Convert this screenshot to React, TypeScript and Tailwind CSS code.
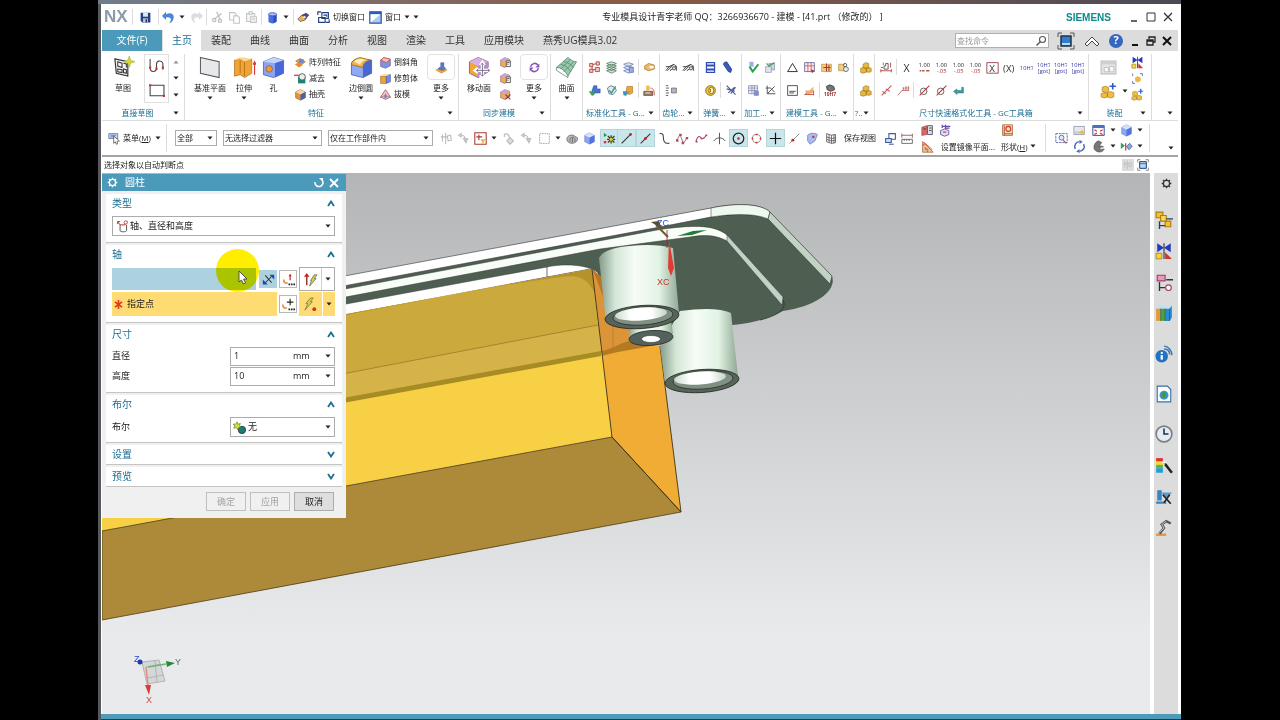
import type { ReactNode } from "react";

const glyphs: Record<string, ReactNode> = {
  save: <><path d="M2 2h12v12H4l-2-2z" fill="#27417f" /><path d="M5 2h6v5H5z" fill="#dfe8f8" /><path d="M5 9h6v5H5z" fill="#b9c7e2" /><path d="M8 10h2v4H8z" fill="#27417f" /></>,
  undo: <path d="M5 1v3c6-3 11 0 9 6-1 3-3 4-5 5 3-4 3-8-4-7v3L0 6z" fill="#4a86d4" />,
  redo: <path d="M11 1v3C5 1 0 4 2 10c1 3 3 4 5 5-3-4-3-8 4-7v3l5-5z" fill="#dddddd" />,
  cut: <g fill="none" stroke="#bdbdbd" strokeWidth="1.5"><path d="M7 1l4 9M13 3l-9 7" /><circle cx="4" cy="11" r="2" /><circle cx="11" cy="12" r="2" /></g>,
  copy: <g fill="#fff" stroke="#c3c3c3" strokeWidth="1.3"><path d="M2 2h6l2 2v7H2z" /><path d="M7 6h5l2 2v7H7z" /></g>,
  paste: <g fill="#f5f5f5" stroke="#c3c3c3" strokeWidth="1.3"><path d="M2 3h10v10H2z" /><path d="M5 1h4v3H5zM7 7h7v7H7zM9 10h3" /></g>,
  cylinder: <><path d="M3 4v9c1 3 9 3 10 0V4z" fill="#4c6fe0" /><path d="M9 5h4v8l-4 2z" fill="#2d4fc4" /><ellipse cx="8" cy="4" rx="5" ry="2" fill="#a9bdf8" stroke="#3852b6" /></>,
  eraser: <><path d="M1 10l5-5 8 0-4 6-6 2z" fill="#e8b34a" stroke="#665a6c" /><path d="M6 5l5-3 4 3-5 5z" fill="#4c4a80" /><path d="M7 7l3-1 1 2-3 1z" fill="#fff" /></>,
  switchWin: <g fill="#fff" stroke="#23427a" strokeWidth="1.4"><path d="M6 2h8v7H6zM2 8h8v6H2z" /><path d="M1 5V1h4M15 10v4h-4M8 5h4v2" fill="none" /></g>,
  win: <><path d="M1 1h14v14H1z" fill="#a9cdf2" stroke="#2a52a0" strokeWidth="1.5" /><path d="M1 1h14v3H1z" fill="#2a5cb8" /><path d="M2 4h12L2 14z" fill="#fff" /></>,
  sketch: <><path d="M2 2l9 2v10l-8-2z" fill="#f4f4f4" stroke="#333" strokeWidth=".8" /><path d="M4 4l3 1v3l-3-1zM8 9l2 .5V12l-2-.5zM4 9l3 .5v2L4 11zM8 5l2 .5V8" fill="none" stroke="#333" strokeWidth=".7" /><path d="M12 0l1 3 3 1-3 1-1 3-1-3-3-1 3-1z" fill="#e5d238" stroke="#93b63a" strokeWidth=".4" /></>,
  spline: <><path d="M2 1v8c0 5 6 5 6 0V6c0-4 5-4 6-1v6" fill="none" stroke="#444" strokeWidth="1" /><path d="M1 8h2v2H1zM7 9h2v2H7zM13 8h2v2h-2z" fill="#c33" /></>,
  rect: <><path d="M2 3h13v10H2z" fill="none" stroke="#444" strokeWidth="1" /><path d="M1 2h2v2H1zM14 12h2v2h-2z" fill="#c33" /></>,
  plane: <path d="M1 1l13 3v11L1 12z" fill="#e6e8ea" stroke="#53575b" strokeWidth=".7" />,
  extrude: <><path d="M1 3l4-1 3 2 5-2v10l-5 3-3-2-4 1z" fill="#f0a436" stroke="#b46d15" strokeWidth=".5" /><path d="M1 3l4-1 3 2 5-2-5-1-4 0z" fill="#fbd88a" /><path d="M5 3v9M8 4v10" stroke="#b46d15" strokeWidth=".6" /><path d="M15 13V5M14 6l1-2 1 2" stroke="#d33" strokeWidth=".8" fill="none" /></>,
  hole: <><path d="M1 4l7-3 7 2v9l-7 3-7-2z" fill="#8ba5f4" stroke="#3c55a8" strokeWidth=".5" /><path d="M1 4l7-3 7 2-6 2z" fill="#c6d3fb" /><path d="M9 5l6-2v9l-6 3z" fill="#4968d8" /><circle cx="5" cy="9" r="2.3" fill="#f09a34" stroke="#744" strokeWidth=".4" /></>,
  pattern: <><path d="M2 6l6-3 6 4-5 4z" fill="#f0a436" stroke="#99651c" strokeWidth=".7" /><path d="M6 7a3 2 0 106 0V4H6z" fill="#6d87d6" /><path d="M1 10l5-2 5 3-5 3z" fill="#e48b2b" /></>,
  subtract: <><path d="M5 6h9v8H5z" fill="#1a8278" /><circle cx="10" cy="6" r="4" fill="#e8f0ee" stroke="#3a4c4a" /><path d="M0 4h6" stroke="#d33" strokeWidth="1.5" /></>,
  shell: <><path d="M2 5l6-3 6 3v7l-6 3-6-3z" fill="#e6953c" stroke="#7b5228" strokeWidth=".7" /><path d="M2 5l6 3 6-3-6-3z" fill="#f8d7a0" /><path d="M8 8l6-3v7l-6 3z" fill="#4a5fb0" /></>,
  edge: <><path d="M1 6c0-3 3-4 6-4l8 1v9l-6 3-8-2z" fill="#8fa9f4" stroke="#3c4e95" strokeWidth=".5" /><path d="M1 6c0-3 3-4 6-5l8 2c-4 0-6 2-6 5z" fill="#f5b545" stroke="#8f6420" strokeWidth=".5" /><path d="M9 8c0-3 3-5 6-5v9l-6 3z" fill="#4a67cd" /><path d="M3 4c1-2 4-2 5-2l4 1c-3 0-4 1-5 3z" fill="#fcf0c8" /></>,
  chamfer: <><path d="M2 5l4-3 8 2v8l-6 3-6-2z" fill="#7f93e2" stroke="#6b4d79" strokeWidth=".7" /><path d="M2 5l4-3 8 2-5 4z" fill="#f2c4bb" stroke="#c44" strokeWidth=".9" /></>,
  trim: <><path d="M2 5h7v9H2z" fill="#f0a33c" stroke="#8d5c1f" strokeWidth=".7" /><path d="M9 4l5-1v9l-5 2z" fill="#718ce8" stroke="#3c4e95" strokeWidth=".7" /><path d="M2 5l4-3 8 1-5 2z" fill="#fae0a2" /></>,
  draft: <><path d="M8 2l6 9-6 3-6-3z" fill="#eccbd0" stroke="#b8484f" /><path d="M8 6l2 5-2 2-2-2z" fill="#7386ca" /><path d="M1 12l7-3 7 3" fill="none" stroke="#888" /></>,
  more: <><path d="M1 11l6-3 8 3-7 4z" fill="#f0a436" stroke="#b47520" strokeWidth=".5" /><path d="M4 9c0 3 9 3 9 0l-2-2V2H7v5z" fill="#5a77cf" stroke="#3b519c" strokeWidth=".5" /></>,
  move: <><path d="M1 4l6-3 7 3v7l-7 4-6-3z" fill="#f2a63c" stroke="#7f5a86" strokeWidth=".6" /><path d="M1 4l6-3 7 3-7 3z" fill="#d4b0e8" /><path d="M7 7l7-3v7l-7 4z" fill="#b48ad4" /><path d="M10 5v9M6 10h9M8.500 6.500l1.500-2 1.500 2M8.500 13l1.500 2 1.500-2M7 8.500L5 10l2 1.500M14 8.500l2 1.500-2 1.500" fill="none" stroke="#fff" strokeWidth="2.200" /><path d="M10 5v9M6 10h9M9 6l1-1 1 1M9 13l1 1 1-1M7 9l-1 1 1 1M14 9l1 1-1 1" fill="none" stroke="#666" strokeWidth=".6" /></>,
  syncA: <><path d="M2 5l5-3 6 2v7l-6 3-5-2z" fill="#f0a85a" stroke="#7c5a76" strokeWidth=".7" /><path d="M2 5l5-3 6 2-5 3z" fill="#c9a2df" /><path d="M9 6h5v7H9z" fill="#fff" stroke="#444" /><path d="M10 8h3M10 10h2" stroke="#444" /></>,
  syncX: <><path d="M2 5l5-3 6 2v7l-6 3-5-2z" fill="#f0a85a" stroke="#7c5a76" strokeWidth=".7" /><path d="M2 5l5-3 6 2-5 3z" fill="#c9a2df" /><path d="M8 8l6 6M14 8l-6 6" stroke="#8a4050" strokeWidth="1.5" /></>,
  refresh: <><path d="M3 7c2-5 7-5 9-2" fill="none" stroke="#8a55b8" strokeWidth="2" /><path d="M14 3v5H9zM2 13V8h5z" fill="#8a55b8" /><path d="M13 9c-2 5-7 5-9 2" fill="none" stroke="#8a55b8" strokeWidth="2" /></>,
  surface: <><path d="M1 8l8-7c2 2 4 3 6 3l-6 10C7 10 4 8 1 8z" fill="#9bc9ae" stroke="#4b7d63" strokeWidth=".5" /><path d="M4 6c3 0 5 2 7 5M6 4c3 0 5 2 7 4M4 9l7-7M6 11l7-7M1 8v2l8 5v-1" fill="none" stroke="#4b7d63" strokeWidth=".5" /></>,
  nodes: <g stroke="#b33" strokeWidth="1"><path d="M4 5l7-2M4 11l8-1M5 5v6" stroke="#555" /><path d="M2 3h4v4H2zM10 1h4v4h-4zM2 10h4v4H2zM9 8h5v5H9z" fill="#f3c7b5" /></g>,
  stack: <g fill="#d8eadb" stroke="#446b57" strokeWidth=".9"><path d="M2 12l6-2 6 2-6 3zM2 9l6-2 6 2-6 3zM2 6l6-2 6 2-6 3zM2 3l6-2 6 2-6 3z" /></g>,
  stackBlue: <g fill="#dbe0f7" stroke="#6274a8" strokeWidth=".9"><path d="M2 12l6-2 6 2-6 3zM2 8l6-2 6 2-6 3zM2 4l6-2 6 2-6 3z" /><path d="M9 8h5v6H9z" fill="#9cabe6" /></g>,
  tag: <><path d="M2 6l5-3 7 2v5l-7 2-5-2z" fill="#edb765" stroke="#a36f20" strokeWidth=".8" /><path d="M8 6h5v3H8z" fill="#fff" /></>,
  checkBlue: <><path d="M7 2h4v4h4v5H9l-3 3-2-3z" fill="#4970d4" stroke="#2b479c" strokeWidth=".6" /><path d="M2 9l3 4 3-4" fill="none" stroke="#39a845" strokeWidth="2" /></>,
  checkGear: <><path d="M3 5l4-3 5 2 2 4-4 5-5-1z" fill="#dbe5f6" stroke="#4c69a8" /><path d="M5 8l3 3 5-8" fill="none" stroke="#38a146" strokeWidth="1.6" /></>,
  checkOrange: <><path d="M6 3h7v8l-4 2-4-2z" fill="#f0a436" stroke="#a06919" strokeWidth=".7" /><path d="M1 9h6l-2 5H2z" fill="#4d86da" /><path d="M2 11l3 3 4-5" fill="none" stroke="#38a146" /></>,
  press: <><path d="M1 9h11v5H1z" fill="#9a8062" stroke="#665039" /><path d="M4 2h4v6H4z" fill="#eeb84e" /><path d="M9 5c4 0 5 3 5 9" fill="none" stroke="#c44" /><path d="M3 11h6" stroke="#fff" /></>,
  gearA: <><path d="M1 12l4-5 6-3 3 3v5M3 12l8-8M6 12l8-6M1 7h6" fill="none" stroke="#444" strokeWidth="1.2" /><circle cx="11" cy="9" r="2" fill="#ddd" stroke="#444" /></>,
  ruler: <><path d="M1 2h3M1 5h4M1 8h3M1 11h4M1 14h3" stroke="#444" /><path d="M8 5h6v6H8z" fill="#a4b4e5" stroke="#8a6f4a" /></>,
  spring: <g fill="none" stroke="#2d4db2" strokeWidth="1.5"><path d="M3 2h10v3H3zM3 6h10v4H3zM3 11h10v3H3z" /></g>,
  coil: <path d="M4 2l3-1 6 9-1 4-3-1-6-9z" fill="#3a5ac4" stroke="#1f3681" />,
  ring: <><circle cx="8" cy="8" r="6" fill="#e8be36" stroke="#806413" /><ellipse cx="9" cy="8" rx="3" ry="4" fill="#fff3c0" stroke="#806413" /><path d="M8 6v4" stroke="#806413" /></>,
  scissors: <path d="M2 2l11 11M2 6l10 3M4 11l8-7M7 12l6-8" fill="none" stroke="#4a5c94" strokeWidth="1.4" />,
  okBlue: <><path d="M3 1h5v6H3z" fill="#9baee8" /><path d="M3 7l4 6 7-9" fill="none" stroke="#27a34d" strokeWidth="2.500" /></>,
  blocks: <g stroke="#8189a8" strokeWidth=".8"><path d="M6 3h7v8H6z" fill="#ccd3ea" /><path d="M2 7h7v7H2z" fill="#e2e5ee" /><path d="M3 3l3 3 7-4" fill="none" stroke="#4da04c" strokeWidth="1.5" /></g>,
  table: <g stroke="#7f86a8" strokeWidth=".9"><path d="M2 2h11v10H2z" fill="#eef1fb" /><path d="M2 5h11M2 8h11M6 2v10M9 2v10" /><path d="M9 9h5v5H9z" fill="#7c90dc" /></g>,
  axes: <path d="M4 2v10h10M4 12l9-9M7 4l6 6M2 5h5" fill="none" stroke="#555" strokeWidth="1.2" />,
  triangle: <path d="M8 3l6 10H2z" fill="none" stroke="#333" strokeWidth="1.2" />,
  tableRed: <><path d="M2 2h12v11H2z" fill="#fbeaea" stroke="#56639c" /><path d="M2 6h12M6 2v11M10 2v11" stroke="#c55" /><path d="M10 10l4 2-3 3z" fill="#933" /></>,
  crossGold: <><path d="M2 4h12v9H2z" fill="#f2cd7c" stroke="#b08534" strokeWidth=".7" /><path d="M8 3v10M4 8h9M11 5v8" stroke="#a33" strokeWidth="1.2" /></>,
  gridGold: <><path d="M2 4h9v8H2z" fill="#f2cd7c" stroke="#9d8642" strokeWidth=".8" /><circle cx="11" cy="10" r="3" fill="#e9eef0" stroke="#3d6b55" /><circle cx="10" cy="5" r="2" fill="#fff" stroke="#444" /></>,
  note: <><path d="M2 2h12v12H2z" fill="#fff" stroke="#333" /><path d="M4 9h8M4 11h6" stroke="#333" /></>,
  brush: <><path d="M2 8h6l5-5-1 8-6 2z" fill="#e9b06d" /><path d="M2 13h11M2 13l3-2M13 8v6" fill="none" stroke="#b33" /></>,
  h7: <><path d="M3 3l4-2 5 2 1 4-5 2-4-2z" fill="#777" stroke="#333" /><text x="0" y="15" fontSize="6" fill="#9b2f2f" fontWeight="bold">10H7</text></>,
  gold: <g fill="#e8b740" stroke="#97701a" strokeWidth=".7"><path d="M5 4l3-2 4 1v5l-4 1-3-1zM2 9l3-1 4 1v5l-4 1-3-1zM9 9l3-1 3 1v4l-3 1-3-1z" /></g>,
  dim: <><path d="M5 10V6h2V3h3v7z" fill="none" stroke="#444" /><path d="M1 12h13M1 10v4M14 10v4M13 2v6M4 2v3M1 8h3" stroke="#a33" /></>,
  x: <text x="3" y="13" fontSize="13" fill="#333">X</text>,
  d1: <><text x="1" y="7" fontSize="7" fill="#222">1.00</text><path d="M2 12h2M5 12h3M10 12h4" stroke="#a55" strokeWidth="2" /></>,
  d2: <><text x="1" y="7" fontSize="7" fill="#222">1.00</text><text x="2" y="15" fontSize="7" fill="#a33">-.05</text></>,
  boxX: <><path d="M1 2h14v13H1z" fill="none" stroke="#8e2f35" /><text x="4" y="13" fontSize="12" fill="#333">X</text></>,
  parenX: <text x="0" y="13" fontSize="12" fill="#333">(X)</text>,
  t10: <text x="0" y="11" fontSize="7" fill="#3333a0">10H7</text>,
  t10g: <><text x="0" y="7" fontSize="7" fill="#3333a0">10H7</text><text x="1" y="15" fontSize="7" fill="#3333a0">[got]</text></>,
  slashRed: <path d="M2 14L14 2M3 9l4 3M7 6l5 3" stroke="#bd5a5a" strokeWidth="1.3" fill="none" />,
  flagRed: <><path d="M1 14l5-6h9" fill="none" stroke="#bd5a5a" /><path d="M7 4h2v3H7zM10 3h2v4h-2zM13 3h2v4h-2z" fill="#c77" /></>,
  dia: <><circle cx="7" cy="9" r="4" fill="none" stroke="#444" /><path d="M2 14L14 2" stroke="#b33" strokeWidth="1.3" /></>,
  back: <path d="M2 9l4-3v2h6V4h2v7H6v2z" fill="#3e9da8" stroke="#24666f" strokeWidth=".6" />,
  assembly: <><path d="M1 2h14v12H1z" fill="#e5e5e5" stroke="#bcbcbc" /><path d="M1 2h14v3H1z" fill="#cfcfcf" /><path d="M4 8h4v4H4zM9 7h4v5H9z" fill="#f8f8f8" stroke="#b5b5b5" strokeWidth=".7" /></>,
  addPart: <><g fill="#f0be42" stroke="#a37618" strokeWidth=".6"><path d="M2 5l3-1 3 1v4l-3 1-3-1zM1 11l3-1 3 1v3l-3 1-3-1zM7 10l3-1 3 1v4l-3 1-3-1z" /></g><path d="M12 1v6M9 4h6" stroke="#2c5cd0" strokeWidth="1.500" /></>,
  mirror: <><path d="M8 1v14" stroke="#333" /><path d="M2 1l6 4-6 4zM14 1L8 5l6 4z" fill="#2439c0" /><path d="M1 10h5v5H1z" fill="#f5d43c" stroke="#9b7b1c" strokeWidth=".7" /><path d="M9 9l6 6H9z" fill="#d2372b" /></>,
  focus: <><path d="M2 5V2M2 11v3h3M11 2h3v3" fill="none" stroke="#455fb0" /><path d="M5 7l3-2 4 2v4l-4 2-3-2z" fill="#edb846" /></>,
  menu: <><path d="M1 2h11v6H1z" fill="#c9d5ee" stroke="#5c74ad" /><path d="M3 4h7M3 6h5" stroke="#5c74ad" /><path d="M7 5l7 6-3 .5 1 3-2 .5-1-3-2 2z" fill="#fff" stroke="#333" strokeWidth=".8" /></>,
  ghost: <g fill="none" stroke="#bcbcbc" strokeWidth="1.300"><path d="M3 3v9M7 1v14M1 6h8M9 5l4-1 1 6-4 1z" /></g>,
  ghostB: <g fill="none" stroke="#bcbcbc" strokeWidth="1.500"><path d="M2 4l3-2v4zM5 4c4 0 5 2 5 5" /><path d="M8 8l5 0-2 5z" fill="#ccc" /></g>,
  ghostC: <g fill="none" stroke="#bcbcbc" strokeWidth="1.500"><path d="M3 6V3c3-2 6 0 6 5" /><path d="M10 7l4 4-4 4-4-4z" fill="#ddd" /></g>,
  filter: <><path d="M1 1h14v14H1z" fill="#fff" stroke="#a33a32" strokeWidth="1.3" /><path d="M6 3v7M3 6h7" stroke="#a33a32" strokeWidth="1.3" /><path d="M8 9h6l-2 3v2h-2v-2z" fill="#edb33f" /></>,
  lasso: <path d="M2 2h12v12H2z" fill="none" stroke="#999" strokeDasharray="2 1" />,
  gray3d: <><path d="M1 9c0-4 4-6 8-5l5 3c1 4-2 6-6 7-4 0-7-2-7-5z" fill="#b8b8bc" stroke="#555" strokeWidth=".8" /><path d="M5 8c2-2 5-2 6 0v4M5 8v4M8 7v6" fill="none" stroke="#555" strokeWidth=".8" /></>,
  cube: <><path d="M2 4l6-3 6 3v8l-6 3-6-3z" fill="#8aa7f2" stroke="#5a6fb7" strokeWidth=".5" /><path d="M2 4l6-3 6 3-6 3z" fill="#d5e0fb" /><path d="M8 7l6-3v8l-6 3z" fill="#4f74dc" /></>,
  snap: <><path d="M1 1l4 3-4 2z" fill="#2a9a3a" /><path d="M6 5l8 8M6 13l8-8M10 4v10M5 9h10" stroke="#3f3c1c" strokeWidth="1.600" /><circle cx="10" cy="9" r="2" fill="#e8d02c" /><path d="M1 11h3v3H1z" fill="#d33" /></>,
  endPt: <><path d="M2 14L13 3" stroke="#333" strokeWidth="1.300" /><circle cx="13" cy="3" r="1.700" fill="#c22" /></>,
  midPt: <><path d="M2 14L14 2" stroke="#333" strokeWidth="1.300" /><circle cx="8" cy="8" r="1.800" fill="#c22" /></>,
  nearPt: <><path d="M2 14L14 2" stroke="#777" /><circle cx="6" cy="10" r="1.800" fill="#c22" /></>,
  curve: <path d="M2 2c6-1 4 4 5 8 1 4 3 4 7 4" fill="none" stroke="#444" strokeWidth="1.300" />,
  poly: <><path d="M1 10l4-7 4 11 5-7" fill="none" stroke="#666" /><path d="M0 9h3v3H0zM4 2h3v3H4zM7 12h3v3H7zM12 6h3v3h-3z" fill="#b8455c" /></>,
  wave: <><path d="M1 12c3-9 5-7 7-4 2 1 4-1 6-4" fill="none" stroke="#a44a60" strokeWidth="1.400" /><path d="M1 11h2v2H1zM7 7h2v2H7zM13 3h2v2h-2z" fill="#b34" /></>,
  cross: <path d="M8 1v14M1 11c3-5 11-5 14 0" fill="none" stroke="#555" strokeWidth="1.200" />,
  center: <><circle cx="8" cy="8" r="6.500" fill="none" stroke="#222" strokeWidth="1.500" /><circle cx="8" cy="8" r="1.500" fill="#c22" /></>,
  quad: <><circle cx="8" cy="8" r="5" fill="none" stroke="#777" /><path d="M7 2h2v2H7zM7 12h2v2H7zM2 7h2v2H2zM12 7h2v2h-2z" fill="#c33" /></>,
  plus: <path d="M8 1v14M1 8h14" stroke="#111" strokeWidth="1.500" />,
  face: <><path d="M2 4c3-3 8-3 12-1l-3 8-6 4-3-4z" fill="#a9bdf0" stroke="#5c70b0" strokeWidth=".8" /><circle cx="9" cy="6" r="1.500" fill="#c33" /></>,
  grid3d: <g fill="none" stroke="#555" strokeWidth="1"><path d="M2 2l6 2v10l-6-2zM8 4l5-1v10l-5 1M2 6l6 2 5-1M2 9l6 2 5-1M5 3v10M11 3v11" /></g>,
  layers: <g fill="#fff" stroke="#3f5b9c" strokeWidth="1.300"><path d="M6 2h8v7H6z" /><path d="M2 8h7v5H2z" fill="#cddaf5" /><path d="M6 15h6" /></g>,
  distance: <g fill="none" stroke="#8b4a4a"><path d="M1 4h13M1 2v5M14 2v5" /><path d="M1 9h13v5H1zM4 9v2M7 9v2M10 9v2" stroke="#555" /></g>,
  book: <><path d="M1 4l6-2v11l-6 1z" fill="#d66" stroke="#833" strokeWidth=".7" /><path d="M8 2h6v11H8z" fill="#ddd" stroke="#445" /><path d="M3 6h3M10 5h3M10 8h3" stroke="#333" /></>,
  stamp: <><path d="M2 8l5-2 5 2v5l-5 2-5-2z" fill="#e8ddf0" stroke="#57469c" /><path d="M4 1v4M8 1v5M4 3h10M8 5h5" fill="none" stroke="#6a4bb0" strokeWidth="1.500" /><path d="M5 10h4" stroke="#c0456a" strokeWidth="1.500" /></>,
  angle: <><path d="M2 2v13h13zM5 9v3h4z" fill="#f1c995" stroke="#a66640" /><path d="M4 3l10 9M2 6h3M8 13v2" stroke="#c44" /></>,
  sheet: <><path d="M2 1h12v13H2z" fill="#f7e3b0" stroke="#a0622b" /><circle cx="9" cy="6" r="3" fill="none" stroke="#c33" strokeWidth="1.400" /><path d="M4 2v12M4 12h10" stroke="#a33" /></>,
  zoomWin: <><path d="M1 2h14v11H1z" fill="none" stroke="#4759a8" strokeDasharray="3 1" /><circle cx="8" cy="7" r="3" fill="#dfe8fa" stroke="#445a9c" /><path d="M10 10l4 4" stroke="#c44" strokeWidth="1.500" /></>,
  image: <><path d="M1 3h13v10H1z" fill="#e6e9ee" stroke="#8d98aa" /><path d="M2 9h11v3H2z" fill="#c5ccd6" /><path d="M11 6l1 3 3 1-3 1-1 3-1-3-3-1 3-1z" fill="#efb93e" /></>,
  rotate: <><path d="M3 11a6 6 0 015-9M13 5a6 6 0 01-5 9" fill="none" stroke="#4866b4" strokeWidth="1.800" /><path d="M8 0l4 2-4 3zM8 11v5l-4-2z" fill="#4866b4" /></>,
  fit: <><path d="M1 2h14v12H1z" fill="#fff" stroke="#35519e" strokeWidth="1.200" /><path d="M1 2h14v3H1z" fill="#4f70bd" /><path d="M3 7l3 2M13 7l-3 2M3 13l3-2M13 13l-3-2" stroke="#c33" strokeWidth="1.500" /></>,
  shade: <><path d="M8 1C2 3 0 12 6 14c4 2 8 0 9-3-2 1-5 1-6-1l5-2-5-1 3-4z" fill="#777" stroke="#444" strokeWidth=".7" /><path d="M9 10l6-2-1 3z" fill="#ccc" /></>,
  section: <><path d="M8 8l4-4 3 4-4 4z" fill="#8fa7df" stroke="#4c61a0" /><path d="M1 3v8l5-4z" fill="#39a051" /><path d="M7 4v9" stroke="#c33" strokeWidth="1.500" /></>,
  navA: <><path d="M1 1h6v5H1zM9 9h5v5H9z" fill="#f5c327" stroke="#b07c0e" /><path d="M5 4h5v5H5z" fill="#f9d95a" stroke="#b07c0e" /><path d="M4 9v7M4 13h5M10 7h6" stroke="#283a78" strokeWidth="1.200" /></>,
  navC: <><path d="M2 2h7v5H2z" fill="#e59bbb" stroke="#a53c6c" /><path d="M4 8v8M4 13h5M10 6h6" stroke="#333" strokeWidth="1.200" /><circle cx="12" cy="13" r="2.500" fill="#fff" stroke="#a53c6c" /></>,
  books: <><path d="M1 4h4v11H1z" fill="#e69a2a" /><path d="M5 4h4v11H5z" fill="#48a143" /><path d="M9 4h4l2-3v11l-2 3H9z" fill="#2a8bd2" /><path d="M1 4l3-3h11l-2 3z" fill="#bde3f2" /><path d="M5 4v11M9 4v11M13 4v11" stroke="#245" strokeWidth=".5" /></>,
  info: <><circle cx="6" cy="10" r="5.500" fill="#2272c3" /><path d="M6 9v4" stroke="#fff" strokeWidth="2" /><circle cx="6" cy="7" r="1" fill="#fff" /><path d="M8 1c4 0 7 4 7 8M8 3.500c3 0 5 2 5 5" fill="none" stroke="#3c7ab5" strokeWidth="1.300" /></>,
  doc: <><path d="M2 1h9l3 3v11H2z" fill="#fff" stroke="#3173b2" /><circle cx="8" cy="9" r="4" fill="#4293c8" /><path d="M6 7l3-1 1 3-2 3-2-2z" fill="#3f9a43" /></>,
  clock: <><circle cx="8" cy="8" r="7" fill="#e5ecf3" stroke="#7b8189" strokeWidth="1.500" /><path d="M8 3v5h4" fill="none" stroke="#234" strokeWidth="1.400" /></>,
  palette: <><path d="M1 1h6v3H1z" fill="#e53127" /><path d="M1 4h6v3H1z" fill="#f5d628" /><path d="M1 7h6v3H1z" fill="#4fbe3a" /><path d="M1 10h6v4H1z" fill="#289ad8" /><path d="M8 5l7 9" stroke="#222" strokeWidth="2.200" /><path d="M8 3v4M6 5h4" stroke="#fff" /></>,
  tool: <><path d="M2 2h4v9H2zM1 12h9v2H1z" fill="#3a83bb" /><path d="M6 4h9l-3 4H8z" fill="#5f9ccb" /><path d="M7 6l7 8M13 6l-5 7" stroke="#222" strokeWidth="1.500" /></>,
  robot: <><path d="M1 13h9v2H1z" fill="#e5903a" /><path d="M4 13l4-5-2-3 4-3 4 2" fill="none" stroke="#555" strokeWidth="2.200" /><path d="M4 12l4-4-2-3 4-3" fill="none" stroke="#ccc" strokeWidth=".8" /></>,
  gear: <g fill="none" stroke="currentColor"><circle cx="8" cy="8" r="4.500" strokeWidth="1.800" /><path d="M8 1v2M8 13v2M1 8h2M13 8h2M3 3l1.500 1.500M11.500 11.500L13 13M13 3l-1.500 1.500M4.500 11.500L3 13" strokeWidth="2" /></g>,
  axisType: <><path d="M5 6v7c0 2 8 2 8 0V6" fill="none" stroke="#555" strokeWidth="1.200" /><path d="M2 2l3 4h6l3-4M2 2h3M2 2v3" fill="none" stroke="#b5302c" strokeWidth="1.200" /><circle cx="12" cy="3" r="2" fill="#fff" stroke="#b5302c" /></>,
  flip: <><path d="M4 12l8-8M4 3l8 9" stroke="#333" strokeWidth="1.300" /><path d="M9 2h6v6zM1 8v6h6z" fill="#2046b4" /></>,
  vecDots: <><path d="M2 8c0 4 2 5 5 4" fill="none" stroke="#df8a36" strokeWidth="2" /><path d="M10 9V3" stroke="#b33" strokeWidth="1.500" /><path d="M8 4l2-3 2 3z" fill="#c22" /><path d="M8 13h2v2H8zM11 13h2v2h-2zM14 13h2v2h-2z" fill="#222" /></>,
  ptDots: <><path d="M1 8c0 4 2 5 5 4" fill="none" stroke="#df8a36" strokeWidth="2" /><path d="M10 1v8M6 5h8" stroke="#222" strokeWidth="1.400" /><path d="M8 13h2v2H8zM11 13h2v2h-2zM14 13h2v2h-2z" fill="#222" /></>,
  vecBolt: <><path d="M4 14V4" stroke="#8e2d2d" strokeWidth="1.500" /><path d="M1 5l3-4 3 4z" fill="#c22" /><path d="M12 3h3l-3 4h2l-7 8 2-6H8z" fill="#d8cf42" stroke="#555" strokeWidth=".7" /></>,
  ptBolt: <><path d="M8 1h3L8 5h2l-8 9 3-7H3z" fill="#d8cf42" stroke="#666" strokeWidth=".7" /><circle cx="12" cy="13" r="2" fill="#d3302a" /></>,
  bool: <><circle cx="11" cy="11" r="4.500" fill="#1c7b72" stroke="#234" /><path d="M5 1l1 3 3-1-1 3 2 2-3 0-1 3-2-3-3 1 1-3-2-2h3z" fill="#cfe03a" stroke="#5e7a1e" strokeWidth=".8" /></>,
};

function Glyph({ name, size = "size-[13px]" }: { name: string; size?: string }) {
  return (
    <svg viewBox="0 0 16 16" className={`${size} shrink-0`} aria-hidden="true">
      {glyphs[name]}
    </svg>
  );
}

function Caret({ className = "" }: { className?: string }) {
  return (
    <svg viewBox="0 0 6 4" className={`h-[4px] w-[6px] shrink-0 ${className}`} aria-hidden="true">
      <path d="M0.500 0.500h5L3 3.500z" fill="#222" />
    </svg>
  );
}

function IconButton({ name, size, className = "" }: { name: string; size?: string; className?: string }) {
  return (
    <button type="button" aria-label={name} className={`flex shrink-0 items-center justify-center ${className}`}>
      <Glyph name={name} size={size} />
    </button>
  );
}

function Rule({ className = "h-4" }: { className?: string }) {
  return <span className={`w-px shrink-0 bg-[#dcdcdc] ${className}`} />;
}

function WindowButtons() {
  return (
    <>
      <button type="button" aria-label="最小化" className="flex size-3 items-center justify-center">
        <svg viewBox="0 0 10 10" className="size-[10px]"><path d="M2 9h6" stroke="#333" strokeWidth="1.500" /></svg>
      </button>
      <button type="button" aria-label="最大化" className="flex size-3 items-center justify-center">
        <svg viewBox="0 0 10 10" className="size-[10px]"><path d="M1 1h8v8H1z" fill="none" stroke="#333" /></svg>
      </button>
      <button type="button" aria-label="关闭" className="flex size-3 items-center justify-center">
        <svg viewBox="0 0 10 10" className="size-[10px]"><path d="M1 1l8 8M9 1L1 9" stroke="#333" strokeWidth="1.300" /></svg>
      </button>
    </>
  );
}

function TitleBar() {
  return (
    <header className="flex h-[26px] items-center bg-white pr-[4px] pl-[2px] text-[8px]">
      <span className="w-[28px] font-['Liberation_Sans',sans-serif] text-[17px] leading-5 font-bold text-[#8b9ba8]">NX</span>
      <Rule />
      <IconButton name="save" className="mx-[6px]" />
      <Rule />
      <IconButton name="undo" className="ml-[3px]" />
      <Caret className="mx-[4px]" />
      <IconButton name="redo" className="ml-px mr-[3px]" />
      <Rule />
      <div className="ml-[4px] mr-[3px] flex gap-[4px]">
        <IconButton name="cut" />
        <IconButton name="copy" />
        <IconButton name="paste" />
      </div>
      <Rule />
      <IconButton name="cylinder" className="ml-[4px]" />
      <Caret className="mx-[4px]" />
      <Rule />
      <IconButton name="eraser" className="mx-[3px]" />
      <button type="button" className="ml-[4px] flex items-center gap-[3px] whitespace-nowrap"><Glyph name="switchWin" />切换窗口</button>
      <button type="button" className="ml-[4px] flex items-center gap-[3px] whitespace-nowrap"><Glyph name="win" />窗口<Caret /></button>
      <Caret className="ml-[3px]" />
      <h1 className="flex-1 text-center text-[9px] whitespace-nowrap">专业模具设计青宇老师 QQ：3266936670 - 建模 - [41.prt （修改的） ]</h1>
      <span className="mr-[17px] font-['Liberation_Sans',sans-serif] text-[10px] font-bold text-[#0d8a8c]">SIEMENS</span>
      <div className="flex gap-[5px]"><WindowButtons /></div>
    </header>
  );
}

const tabs = ["主页", "装配", "曲线", "曲面", "分析", "视图", "渲染", "工具", "应用模块", "燕秀UG模具3.02"];

function TabBar() {
  return (
    <nav className="flex h-[21px] items-stretch bg-[#dcdcdc] pr-[5px] text-[10px]">
      <button type="button" className="w-[60px] bg-[#4b9abb] text-white">文件(F)</button>
      <div className="ml-px flex gap-px">
        {tabs.map((tab, i) => (
          <button key={tab} type="button" className={`px-[9px] whitespace-nowrap ${i === 0 ? "bg-white text-[#1b6e92]" : "text-[#333]"}`}>{tab}</button>
        ))}
      </div>
      <div className="ml-auto flex items-center">
        <label className="flex h-[15px] w-[94px] items-center border border-[#b0b0b0] bg-white px-px">
          <input aria-label="查找命令" placeholder="查找命令" className="w-full min-w-0 text-[8px] outline-none placeholder:text-[#9a9a9a]" />
          <svg viewBox="0 0 16 16" className="size-[12px] shrink-0"><circle cx="10" cy="6" r="4" fill="none" stroke="#555" strokeWidth="1.500" /><path d="M7 9l-5 5" stroke="#555" strokeWidth="2" /></svg>
        </label>
        <button type="button" aria-label="全屏" className="ml-[8px]">
          <svg viewBox="0 0 18 18" className="size-[18px]"><path d="M1 5V1h4M13 1h4v4M17 13v4h-4M5 17H1v-4" fill="none" stroke="#555" /><path d="M4 4h10v10H4z" fill="#2e7fd0" stroke="#234" strokeWidth="1.500" /><path d="M5 11h8v2H5z" fill="#b8dcf6" /></svg>
        </button>
        <button type="button" aria-label="最小化功能区" className="ml-[9px]">
          <svg viewBox="0 0 16 12" className="h-[12px] w-[16px]"><path d="M1 9l7-7 7 7-2 2-5-5-5 5z" fill="#fff" stroke="#444" /></svg>
        </button>
        <button type="button" aria-label="帮助" className="ml-[9px] flex size-[14px] items-center justify-center rounded-full bg-[#3567c0] text-[11px] font-bold text-white">?</button>
        <div className="ml-[6px] flex gap-[4px]">
          <button type="button" aria-label="最小化文档" className="flex size-3 items-center justify-center"><svg viewBox="0 0 10 10" className="size-[10px]"><path d="M2 9h6" stroke="#111" strokeWidth="2" /></svg></button>
          <button type="button" aria-label="还原文档" className="flex size-3 items-center justify-center"><svg viewBox="0 0 10 10" className="size-[10px]"><path d="M3 3V1h6v5H7M1 4h6v5H1zM1 5h6" fill="none" stroke="#222" strokeWidth="1.300" /></svg></button>
          <button type="button" aria-label="关闭文档" className="flex size-3 items-center justify-center"><svg viewBox="0 0 10 10" className="size-[10px]"><path d="M1 1l8 8M9 1L1 9" stroke="#111" strokeWidth="2" /></svg></button>
        </div>
      </div>
    </nav>
  );
}

function Group({ title, width, caret = true, children }: { title: string; width: string; caret?: boolean; children?: ReactNode }) {
  return (
    <section className={`flex shrink-0 flex-col border-r border-[#dcdcdc] ${width}`}>
      <div className="flex h-[52px]">{children}</div>
      <div className="flex h-[14px] items-center pr-[5px]">
        <h2 className="min-w-0 flex-1 overflow-hidden text-center text-[8px] leading-[12px] whitespace-nowrap text-[#1b6e92]">{title}</h2>
        {caret && <Caret />}
      </div>
    </section>
  );
}

function BigButton({ name, label, width, caret = true, boxed = false }: { name: string; label: string; width: string; caret?: boolean; boxed?: boolean }) {
  return (
    <button type="button" className={`flex shrink-0 flex-col items-center text-[8px] leading-[12px] whitespace-nowrap ${width}`}>
      {boxed ? (
        <span className="flex h-[26px] w-[28px] items-center justify-center rounded-sm border border-[#e2e2e2]"><Glyph name={name} /></span>
      ) : (
        <span className="flex h-[26px] items-center"><Glyph name={name} size="size-[23px]" /></span>
      )}
      <span className="mt-[2px]">{label}</span>
      {caret && <Caret className="mt-[2px]" />}
    </button>
  );
}

function ListButton({ name, label, caret = false }: { name: string; label?: string; caret?: boolean }) {
  return (
    <button type="button" aria-label={label ?? name} className="flex h-[16px] items-center gap-[2px] text-[8px] whitespace-nowrap">
      <Glyph name={name} />
      {label}
      {caret && <Caret className="ml-[5px]" />}
    </button>
  );
}

// "|" in a row draws a thin divider
function IconRows({ rows }: { rows: string[][] }) {
  return (
    <div className="flex flex-col gap-[9px] pt-[6px] pl-[4px]">
      {rows.map((row, i) => (
        <div key={i} className="flex h-[14px] items-center gap-[3px]">
          {row.map((name, j) => (name === "|" ? <Rule key={j} /> : <IconButton key={j} name={name} className="w-[14px]" />))}
        </div>
      ))}
    </div>
  );
}

function Ribbon() {
  return (
    <div className="flex h-[70px] border-b border-[#dcdcdc] bg-white pt-[3px]">
      <Group title="直接草图" width="w-[83px]">
        <BigButton name="sketch" label="草图" width="w-[42px]" caret={false} />
        <div className="flex h-[49px] w-[25px] flex-col items-center justify-around border border-[#e0e0e0]">
          <IconButton name="spline" size="size-[17px]" />
          <IconButton name="rect" size="size-[17px]" />
        </div>
        <div className="flex h-[49px] flex-col items-center justify-around pl-[4px]">
          <Caret className="rotate-180 opacity-50" />
          <Caret />
          <Caret />
        </div>
      </Group>
      <Group title="特征" width="w-[274px]">
        <div className="flex pl-[7px]">
          <BigButton name="plane" label="基准平面" width="w-[36px]" />
          <BigButton name="extrude" label="拉伸" width="w-[32px]" />
          <BigButton name="hole" label="孔" width="w-[27px]" caret={false} />
        </div>
        <div className="flex w-[57px] flex-col pl-[7px]">
          <ListButton name="pattern" label="阵列特征" />
          <ListButton name="subtract" label="减去" caret />
          <ListButton name="shell" label="抽壳" />
        </div>
        <BigButton name="edge" label="边倒圆" width="w-[34px]" />
        <div className="flex w-[49px] flex-col pl-px">
          <ListButton name="chamfer" label="倒斜角" />
          <ListButton name="trim" label="修剪体" />
          <ListButton name="draft" label="拔模" />
        </div>
        <BigButton name="more" label="更多" width="w-[28px]" boxed />
      </Group>
      <Group title="同步建模" width="w-[92px]">
        <BigButton name="move" label="移动面" width="w-[40px]" caret={false} />
        <div className="flex w-[21px] flex-col">
          <ListButton name="syncA" />
          <ListButton name="syncA" />
          <ListButton name="syncX" />
        </div>
        <BigButton name="refresh" label="更多" width="w-[28px]" boxed />
      </Group>
      <Group title="" width="w-[32px]" caret={false}>
        <BigButton name="surface" label="曲面" width="w-[31px]" />
      </Group>
      <Group title="标准化工具 - G..." width="w-[77px]">
        <IconRows rows={[["nodes", "stack", "stackBlue", "|", "tag"], ["checkBlue", "checkGear", "checkOrange", "|", "press"]]} />
      </Group>
      <Group title="齿轮..." width="w-[39px]">
        <IconRows rows={[["gearA", "gearA"], ["ruler"]]} />
      </Group>
      <Group title="弹簧..." width="w-[43px]">
        <IconRows rows={[["spring", "coil"], ["ring", "|", "scissors"]]} />
      </Group>
      <Group title="加工..." width="w-[39px]">
        <IconRows rows={[["okBlue", "blocks"], ["table", "axes"]]} />
      </Group>
      <Group title="建模工具 - G..." width="w-[73px]">
        <IconRows rows={[["triangle", "tableRed", "crossGold", "gridGold"], ["note", "brush", "|", "h7"]]} />
      </Group>
      <Group title="?.." width="w-[21px]">
        <IconRows rows={[["gold"], ["gold"]]} />
      </Group>
      <Group title="尺寸快速格式化工具 - GC工具箱" width="w-[214px]">
        <IconRows
          rows={[
            ["dim", "|", "x", "d1", "d2", "d2", "d2", "boxX", "parenX", "t10", "t10g", "t10g", "t10g"],
            ["slashRed", "flagRed", "|", "dia", "dia", "back"],
          ]}
        />
      </Group>
      <Group title="装配" width="w-[63px]">
        <div className="flex w-[42px] flex-col gap-[6px] pt-[5px] pl-[11px]">
          <IconButton name="assembly" size="size-[17px]" className="self-start" />
          <button type="button" aria-label="添加组件" className="flex items-center gap-[5px]"><Glyph name="addPart" size="size-[17px]" /><Caret /></button>
        </div>
        <div className="flex flex-col">
          <ListButton name="mirror" />
          <ListButton name="focus" />
          <ListButton name="addPart" />
        </div>
      </Group>
      <div className="flex h-[66px] flex-1 items-end justify-end pr-[5px] pb-[5px]"><Caret /></div>
    </div>
  );
}

function ToolSelect({ label, value, width }: { label: string; value: string; width: string }) {
  return (
    <label className={`relative flex h-[16px] shrink-0 items-center ${width}`}>
      <select aria-label={label} className="h-full w-full appearance-none rounded-none border border-[#ababab] bg-white pl-px text-[8px] outline-none">
        <option>{value}</option>
      </select>
      <Caret className="pointer-events-none absolute right-[4px]" />
    </label>
  );
}

function Toolbar() {
  const on = "h-[16px] w-[17px] bg-[#c9e6ec] outline outline-[#b5d5dc]";
  const off = "h-[16px] w-[17px]";
  return (
    <div className="flex h-[36px] items-center border-b-2 border-[#a3a3a3] bg-white pr-[4px] text-[8px] whitespace-nowrap">
      <button type="button" className="ml-[6px] flex items-center gap-[2px]"><Glyph name="menu" /><span>菜单(<u>M</u>)</span><Caret className="ml-[2px]" /></button>
      <Rule className="mx-[5px] h-7" />
      <div className="flex gap-[6px] pl-[3px]">
        <ToolSelect label="类型过滤器" value="全部" width="w-[42px]" />
        <ToolSelect label="选择过滤器" value="无选择过滤器" width="w-[99px]" />
        <ToolSelect label="选择范围" value="仅在工作部件内" width="w-[105px]" />
      </div>
      <div className="ml-[7px] flex items-center gap-[4px]">
        <IconButton name="ghost" />
        <IconButton name="ghostB" />
        <IconButton name="filter" />
        <Caret />
        <IconButton name="ghostC" className="mx-px" />
        <IconButton name="ghostB" className="mr-px" />
        <IconButton name="lasso" />
        <Caret />
        <IconButton name="gray3d" className="ml-px" />
        <IconButton name="cube" />
      </div>
      <div className="ml-[5px] flex"><IconButton name="snap" className={on} /><IconButton name="endPt" className={on} /></div>
      <div className="ml-[2px] flex w-[203px] items-center justify-between">
        <IconButton name="midPt" className={on} />
        <IconButton name="curve" className={off} />
        <IconButton name="poly" className={off} />
        <IconButton name="wave" className={off} />
        <IconButton name="cross" className={off} />
        <IconButton name="center" className={on} />
        <IconButton name="quad" className={off} />
        <IconButton name="plus" className={on} />
        <IconButton name="nearPt" className={off} />
        <IconButton name="face" className={off} />
        <IconButton name="grid3d" className={off} />
      </div>
      <button type="button" className="ml-[4px]">保存视图</button>
      <IconButton name="layers" className="ml-[8px]" />
      <IconButton name="distance" className="ml-[4px]" />
      <div className="ml-[7px] flex flex-col gap-[3px]"><IconButton name="book" /><IconButton name="angle" /></div>
      <div className="ml-[5px] flex w-[58px] flex-col gap-[3px]">
        <IconButton name="stamp" className="self-start" />
        <button type="button" className="h-[13px] leading-[13px]">设置镜像平面...</button>
      </div>
      <div className="ml-[4px] flex w-[38px] flex-col gap-[3px]">
        <IconButton name="sheet" className="self-start" />
        <button type="button" className="flex h-[13px] items-center gap-[2px] leading-[13px]"><span>形状(<u>H</u>)</span><Caret /></button>
      </div>
      <Rule className="mx-[6px] h-7" />
      <IconButton name="zoomWin" className="ml-[3px]" />
      <div className="ml-[5px] flex flex-col gap-[3px]"><IconButton name="image" /><IconButton name="rotate" /></div>
      <div className="ml-[6px] flex flex-col gap-[3px]">
        <button type="button" aria-label="适合窗口" className="flex items-center gap-[5px]"><Glyph name="fit" /><Caret /></button>
        <button type="button" aria-label="着色" className="flex items-center gap-[5px]"><Glyph name="shade" /><Caret /></button>
      </div>
      <div className="ml-[4px] flex flex-col gap-[3px]">
        <button type="button" aria-label="视图方向" className="flex items-center gap-[4px]"><Glyph name="cube" /><Caret /></button>
        <button type="button" aria-label="剖切" className="flex items-center gap-[4px]"><Glyph name="section" /><Caret /></button>
      </div>
      <Rule className="ml-[6px] h-7" />
      <Caret className="mt-[20px] ml-auto" />
    </div>
  );
}

function Scene() {
  return (
    <svg viewBox="102 173 1048 541" preserveAspectRatio="xMinYMin slice" className="absolute inset-0 h-full w-full font-['Liberation_Sans',sans-serif]" role="img" aria-label="模型">
      <defs>
        <linearGradient id="tube" x1="0" x2="1">
          <stop offset="0" stopColor="#869b8a" />
          <stop offset=".2" stopColor="#d3e6d6" />
          <stop offset=".45" stopColor="#f6fcf6" />
          <stop offset=".75" stopColor="#e2f3e4" />
          <stop offset="1" stopColor="#8fa894" />
        </linearGradient>
        <linearGradient id="bore" x1="0" x2="1">
          <stop offset="0" stopColor="#c9dccc" />
          <stop offset=".3" stopColor="#ffffff" />
          <stop offset=".7" stopColor="#ffffff" />
          <stop offset="1" stopColor="#bfd5c3" />
        </linearGradient>
      </defs>

      {/* base plate */}
      <path d="M102 326L711 208C735 203 760 203 770 212L832 276C837 290 818 306 783 311C768 319 752 323 733 325L660 330L102 360z" fill="#4e5f52" />
      <path d="M102 321L711 208C735 203 760 203 770 212L768 219C757 214 738 213 711 217L660 227L102 331z" fill="#fff" stroke="#333" strokeWidth=".6" />
      <path d="M711 217V208C735 203 760 203 770 212L768 219C757 214 738 213 711 217z" fill="#edf8ee" stroke="#333" strokeWidth=".5" />
      <path d="M770 212L832 276L830 284L768 219z" fill="#c2d3c4" stroke="#333" strokeWidth=".6" />

      {/* raised step */}
      <path d="M102 335L657 230C690 225 714 224 727 235L783 297L782 305L727 241C718 236 707 234 690 237L600 249L102 343z" fill="#f8fdf8" stroke="#333" strokeWidth=".5" />
      <path d="M727 235L783 297L782 305L727 241z" fill="#c2d3c4" stroke="#333" strokeWidth=".5" />
      <path d="M783 300C787 308 780 315 760 320" fill="none" stroke="#26352a" strokeWidth=".8" />
      <path d="M102 349L547 267C565 263 590 265 598 273L598 281L590 269L547 277L102 361z" fill="#fff" stroke="#333" strokeWidth=".5" />
      <path d="M547 267v10" stroke="#333" strokeWidth=".7" />

      {/* translucent block */}
      <path d="M102 359L592 269L612 437L102 531z" fill="#f8d046" />
      <path d="M102 359L592 269L601 354L102 447z" fill="#cca93d" />
      <path d="M102 420L598 325L601 352L102 442z" fill="#d6b348" />
      <path d="M102 359L592 269C593 276 595 287 597 298C588 275 576 275 560 277C450 292 300 326 102 363z" fill="#b5922c" />
      <path d="M102 442L601 351V356L102 447z" fill="#a78b25" />
      <path d="M102 420L598 325" stroke="#8d7528" strokeWidth=".7" />
      <path d="M592 269L602 278L608 318L628 325L632 345L660 346L681 512L612 437z" fill="#f1ac36" />
      <path d="M592 269L602 278L608 318L628 325L632 345L602 355z" fill="#dc9438" />
      <path d="M592 269L602 278L606 305C601 292 598 281 592 269z" fill="#b87625" />
      <path d="M602 351C616 348 620 342 632 341L658 344C640 349 622 350 602 356z" fill="#b47a22" />
      <path d="M613 324V347" stroke="#a87730" strokeWidth=".7" />
      <path d="M102 531L612 437L681 512L102 620z" fill="#ad8a39" stroke="#4b3c15" strokeWidth=".8" />
      <path d="M592 269L612 437L681 512L660 346" fill="none" stroke="#3c3215" strokeWidth=".9" />

      {/* rear boss */}
      <path d="M660 346L665 383Q702 368 738 376L731 313Q716 306 680 311z" fill="url(#tube)" />
      <ellipse cx="702" cy="381" rx="37" ry="11.500" transform="rotate(-4 702 381)" fill="#566558" stroke="#222" strokeWidth=".8" />
      <ellipse cx="703" cy="380" rx="30" ry="9" transform="rotate(-4 703 380)" fill="#7f9082" stroke="#222" strokeWidth=".7" />
      <ellipse cx="700" cy="378" rx="26" ry="6.500" transform="rotate(-4 700 378)" fill="url(#bore)" />
      {/* small pin */}
      <path d="M628 325L631 342L673 334L671 320z" fill="url(#tube)" />
      <ellipse cx="651" cy="338" rx="22" ry="7.500" transform="rotate(-4 651 338)" fill="#53625a" stroke="#222" strokeWidth=".7" />
      <ellipse cx="651" cy="339" rx="9.500" ry="3.500" fill="#fff" stroke="#222" strokeWidth=".5" />
      {/* front boss */}
      <path d="M599 258Q604 248 630 246Q655 243 673 248L679 313L606 322z" fill="url(#tube)" />
      <ellipse cx="642" cy="317" rx="37" ry="11.500" transform="rotate(-4 642 317)" fill="#566558" stroke="#222" strokeWidth=".8" />
      <ellipse cx="643" cy="316" rx="30" ry="9" transform="rotate(-4 643 316)" fill="#7f9082" stroke="#222" strokeWidth=".7" />
      <ellipse cx="641" cy="314" rx="26" ry="6.500" transform="rotate(-4 641 314)" fill="url(#bore)" />

      {/* work coordinate system */}
      <path d="M656 225L668 237" stroke="#6b5a34" strokeWidth="2" />
      <path d="M651 222l8-1 3 8z" fill="#5d4b29" />
      <path d="M667 230v18" stroke="#833" strokeWidth=".8" />
      <path d="M669 240L674 268L671 276L668 268z" fill="#e23b35" />
      <path d="M677 236L693 231L707 230L692 235z" fill="#1f7d38" />
      <text x="657" y="226" fontSize="9" fill="#2c55d0">ZC</text>
      <text x="657" y="285" fontSize="9" fill="#c9302c">XC</text>
      <text x="698" y="227" fontSize="9" fill="#2b6a3b">YC</text>

      {/* view triad */}
      <path d="M142 662L159 660L165 681L147 684z" fill="#d4d6d7" stroke="#b1b3b5" />
      <path d="M146 667L161 664M147 678L164 675M155 661L157 682" fill="none" stroke="#b1b3b5" />
      <path d="M148 667L166 664" stroke="#69b877" strokeWidth="1.500" />
      <path d="M166 661l9 2-8 4z" fill="#238a3a" />
      <path d="M146 667L148 686" stroke="#ea8883" strokeWidth="1.500" />
      <path d="M145 685h6l-2 10z" fill="#dc3a34" />
      <circle cx="140" cy="662" r="2.500" fill="#1c39a6" />
      <text x="134" y="662" fontSize="9" fill="#2c48d0">Z</text>
      <text x="175" y="665" fontSize="9" fill="#4c7a52">Y</text>
      <text x="146" y="703" fontSize="9" fill="#cf4a44">X</text>
    </svg>
  );
}

function Section({ title, open = true, children }: { title: string; open?: boolean; children?: ReactNode }) {
  return (
    <section className="border-b border-[#c4c4c4] bg-white pr-[7px] pl-[6px]">
      <h3>
        <button type="button" aria-expanded={open} className="flex h-[19px] w-full items-center justify-between text-[10px] text-[#1b6e92]">
          {title}
          <svg viewBox="0 0 8 7" className={`h-[7px] w-[8px] ${open ? "" : "rotate-180"}`} aria-hidden="true">
            <path d="M1 6l3-4.500L7 6" fill="none" stroke="#1b6e92" strokeWidth="1.800" />
          </svg>
        </button>
      </h3>
      {children}
    </section>
  );
}

function Measure({ id, label, value }: { id: string; label: string; value: string }) {
  return (
    <div className="flex h-[20px] items-center justify-between">
      <label htmlFor={id}>{label}</label>
      <div className="flex h-[19px] w-[105px] items-center border border-[#ababab] pr-[3px] pl-[3px]">
        <input id={id} defaultValue={value} className="w-[59px] min-w-0 outline-none" />
        <span className="flex-1">mm</span>
        <Caret />
      </div>
    </div>
  );
}

function CylinderDialog() {
  const tool = "size-[18px] border border-[#b9b9b9] bg-white";
  return (
    <form className="absolute top-px left-0 w-[244px] bg-[#f0f0f0] text-[9px]">
      <header className="flex h-[17px] items-center bg-[#4b9abb] pr-[7px] pl-[5px] text-white">
        <Glyph name="gear" size="size-[11px]" />
        <h2 className="ml-[7px] flex-1 text-[10px]">圆柱</h2>
        <button type="button" aria-label="重置" className="mr-[5px]">
          <svg viewBox="0 0 10 10" className="size-[10px]"><path d="M1 4a4 4 0 107-2" fill="none" stroke="#fff" strokeWidth="1.500" /><path d="M5 0h4v4z" fill="#fff" /></svg>
        </button>
        <button type="button" aria-label="关闭">
          <svg viewBox="0 0 10 10" className="size-[10px]"><path d="M1 1l8 8M9 1L1 9" stroke="#fff" strokeWidth="1.800" /></svg>
        </button>
      </header>
      <div className="flex flex-col gap-[2px] px-[4px] pt-[3px]">
        <Section title="类型">
          <label className="relative mt-[3px] mb-[6px] flex h-[20px] items-center">
            <select aria-label="类型" className="h-full w-full appearance-none rounded-none border border-[#ababab] pl-[17px] outline-none">
              <option>轴、直径和高度</option>
            </select>
            <span className="pointer-events-none absolute left-[4px]"><Glyph name="axisType" /></span>
            <Caret className="pointer-events-none absolute right-[4px]" />
          </label>
        </Section>
        <Section title="轴">
          <div className="mt-[3px] flex h-[24px] items-center">
            <input aria-label="指定矢量" className="h-[22px] min-w-0 flex-1 bg-[#acd1df] outline-none" />
            <IconButton name="flip" className="ml-[3px] size-[18px] bg-[#acd1df]" />
            <IconButton name="vecDots" className={`ml-[2px] ${tool}`} />
            <div className="ml-[2px] flex h-[24px] w-[36px] border border-[#ababab]">
              <IconButton name="vecBolt" size="size-[15px]" className="flex-1 border-r border-[#cfcfcf]" />
              <button type="button" aria-label="矢量列表" className="flex w-[12px] items-center justify-center"><Caret /></button>
            </div>
          </div>
          <div className="mt-px mb-[6px] flex h-[24px] items-center">
            <button type="button" className="flex h-full flex-1 items-center gap-[4px] bg-[#ffdb73] pl-[2px]">
              <svg viewBox="0 0 10 10" className="size-[9px]"><path d="M5 0v10M1 2l8 6M9 2L1 8" stroke="#e0361c" strokeWidth="1.800" /></svg>
              指定点
            </button>
            <IconButton name="ptDots" className={`ml-[2px] ${tool}`} />
            <div className="ml-[2px] flex h-full w-[36px] gap-px">
              <IconButton name="ptBolt" size="size-[15px]" className="flex-1 bg-[#ffdb73]" />
              <button type="button" aria-label="点列表" className="flex w-[12px] items-center justify-center bg-[#ffdb73]"><Caret /></button>
            </div>
          </div>
        </Section>
        <Section title="尺寸">
          <div className="mt-[2px] mb-[6px]">
            <Measure id="diameter" label="直径" value="1" />
            <Measure id="height" label="高度" value="10" />
          </div>
        </Section>
        <Section title="布尔">
          <div className="mt-[3px] mb-[5px] flex h-[20px] items-center justify-between">
            <label htmlFor="boolean">布尔</label>
            <div className="relative flex h-full w-[105px] items-center">
              <select id="boolean" className="h-full w-full appearance-none rounded-none border border-[#ababab] pl-[17px] outline-none">
                <option>无</option>
              </select>
              <span className="pointer-events-none absolute left-[3px]"><Glyph name="bool" /></span>
              <Caret className="pointer-events-none absolute right-[4px]" />
            </div>
          </div>
        </Section>
        <Section title="设置" open={false} />
        <Section title="预览" open={false} />
      </div>
      <footer className="flex justify-end gap-[4px] pt-[5px] pr-[12px] pb-[7px]">
        <button type="button" disabled className="h-[19px] w-[40px] border border-[#bfbfbf] text-[#a3a3a3]">确定</button>
        <button type="button" disabled className="h-[19px] w-[40px] border border-[#bfbfbf] text-[#a3a3a3]">应用</button>
        <button type="button" className="h-[19px] w-[40px] border border-[#adadad] bg-[#dedede]">取消</button>
      </footer>
    </form>
  );
}

function ClickHalo() {
  return (
    <div className="pointer-events-none absolute top-[76px] left-[114px] size-[43px] rounded-full bg-[#ffee00] mix-blend-multiply" />
  );
}

function Cursor() {
  return (
    <svg viewBox="0 0 10 15" className="pointer-events-none absolute top-[97px] left-[136px] h-[15px] w-[10px]" aria-hidden="true">
      <path d="M1 1v11l2.500-2 2 4 2-1-2-4H9z" fill="#fff" stroke="#333" strokeWidth=".8" />
    </svg>
  );
}

function ResourceBar() {
  return (
    <aside className="ml-[4px] flex w-[24px] flex-col items-start bg-[#dcdcdc] pl-px text-[#333]">
      <IconButton name="gear" size="size-[11px]" className="ml-[6px] h-[20px]" />
      <div className="mt-[18px] flex flex-col gap-[13px]">
        {["navA", "mirror", "navC", "books"].map((n) => <IconButton key={n} name={n} size="size-[18px]" />)}
      </div>
      <div className="mt-[23px] flex flex-col gap-[22px]">
        {["info", "doc", "clock"].map((n) => <IconButton key={n} name={n} size="size-[18px]" />)}
      </div>
      <div className="mt-[14px] flex flex-col gap-[13px]">
        {["palette", "tool", "robot"].map((n) => <IconButton key={n} name={n} size="size-[18px]" />)}
      </div>
    </aside>
  );
}

export default function App() {
  return (
    <div className="flex min-h-screen flex-col bg-black pr-[99px] pl-[98px] font-['Open_Sans','Noto_Sans_CJK_SC',sans-serif] text-[#222]">
      <div className="h-[4px] bg-linear-to-r from-[#6f7d8c] via-[#8a5a44] to-[#4a4a55]" />
      <div className="flex flex-1 flex-col border-l-3 border-[#55585c]">
        <div className="flex flex-1 flex-col bg-white pr-[3px] pl-px">
          <TitleBar />
          <TabBar />
          <Ribbon />
          <Toolbar />
          <div className="flex h-[16px] items-center justify-between pr-[29px] pl-[2px] text-[8px]">
            <span>选择对象以自动判断点</span>
            <div className="flex gap-[3px]">
              <button type="button" aria-label="提示" className="flex size-3 items-center justify-center bg-[#dcdcdc]"><Glyph name="ghost" size="size-[10px]" /></button>
              <button type="button" aria-label="全屏显示" className="size-3">
                <svg viewBox="0 0 18 18" className="size-3"><path d="M1 5V1h4M13 1h4v4M17 13v4h-4M5 17H1v-4" fill="none" stroke="#555" /><path d="M4 4h10v10H4z" fill="#b9d6f2" stroke="#23427a" strokeWidth="1.500" /><path d="M4 7h10" stroke="#23427a" /></svg>
              </button>
            </div>
          </div>
          <div className="flex flex-1">
            <main className="relative flex-1 overflow-hidden bg-linear-to-b from-[#b4b5b7] via-[#d3d4d6] via-50% to-[#e8eaec] to-85%">
              <Scene />
              <CylinderDialog />
              <ClickHalo />
              <Cursor />
            </main>
            <ResourceBar />
          </div>
        </div>
        <div className="h-[5px] bg-[#4f9ab9]" />
        <div className="h-px bg-[#3a3436]" />
      </div>
    </div>
  );
}
